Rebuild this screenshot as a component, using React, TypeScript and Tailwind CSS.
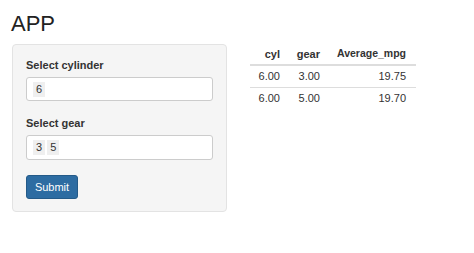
export default function App() {
  const rows = [
    { cyl: "6.00", gear: "3.00", mpg: "19.75" },
    { cyl: "6.00", gear: "5.00", mpg: "19.70" },
  ];

  return (
    <div className="w-[474px] h-[253px] bg-white text-[#333] font-['Liberation_Sans',Arial,sans-serif] text-[11px]">
      <h1 className="pl-[11px] pt-[11px] text-[22px] leading-[26px] h-[44px] text-[#222]">APP</h1>
      <div className="flex">
        {/* sidebar */}
        <div className="ml-[12px] w-[215px] h-[168px] bg-[#f5f5f5] border border-[#e3e3e3] rounded-[4px] px-[13px] pt-[14px]">
          <div className="font-bold text-[11px] leading-[13px] mb-[5px]">Select cylinder</div>
          <div className="h-[24px] bg-white border border-[#ccc] rounded-[3px] flex items-center gap-[2px] px-[6px]">
            <span className="bg-[#efefef] px-[3px] leading-[15px]">6</span>
          </div>
          <div className="font-bold text-[11px] leading-[13px] mt-[16px] mb-[5px]">Select gear</div>
          <div className="h-[25px] bg-white border border-[#ccc] rounded-[3px] flex items-center gap-[2px] px-[6px]">
            <span className="bg-[#efefef] px-[3px] leading-[15px]">3</span>
            <span className="bg-[#efefef] px-[3px] leading-[15px]">5</span>
          </div>
          <button className="mt-[15px] w-[52px] h-[24px] bg-[#2d6ca2] border border-[#245a88] rounded-[3px] text-white text-[11px]">
            Submit
          </button>
        </div>
        {/* table */}
        <div className="ml-[23px]">
          <table className="border-collapse text-[11px]">
            <thead>
              <tr className="h-[21px] border-b-2 border-[#ddd]">
                <th className="w-[36px] pr-[6px] text-right font-bold align-bottom pb-[2px]">cyl</th>
                <th className="w-[40px] pr-[6px] text-right font-bold align-bottom pb-[2px]">gear</th>
                <th className="w-[90px] pr-[10px] text-right font-bold align-bottom pb-[2px] text-[10.5px]">Average_mpg</th>
              </tr>
            </thead>
            <tbody>
              {rows.map((r, i) => (
                <tr key={i} className={`h-[22px] ${i === 0 ? "border-b border-[#ddd]" : ""}`}>
                  <td className="pr-[6px] text-right">{r.cyl}</td>
                  <td className="pr-[6px] text-right">{r.gear}</td>
                  <td className="pr-[10px] text-right">{r.mpg}</td>
                </tr>
              ))}
            </tbody>
          </table>
        </div>
      </div>
    </div>
  );
}
